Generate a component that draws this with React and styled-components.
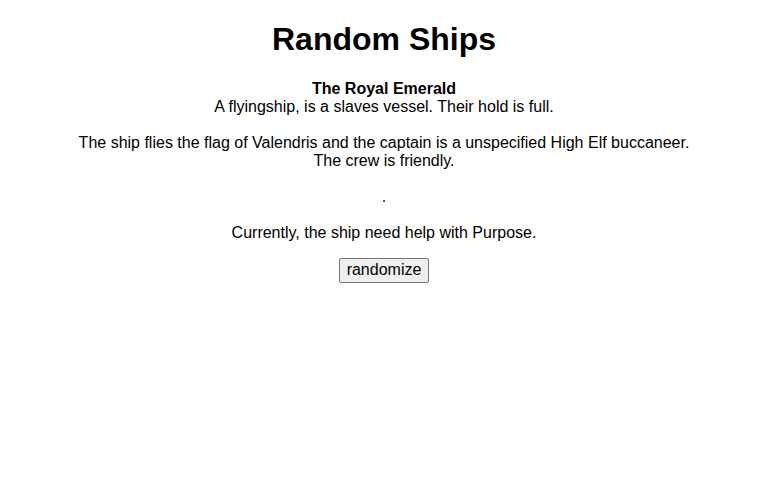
import { useState } from "react";
import styled, { createGlobalStyle } from "styled-components";

const GlobalStyle = createGlobalStyle`
  body {
    margin: 0 8px;
    background: #fff;
    color: #000;
    font-family: "Liberation Sans", Arial, sans-serif;
  }
`;

const Page = styled.div`
  text-align: center;
`;

const Title = styled.h1`
  font-size: 32px;
  font-weight: 700;
  line-height: 37px;
  margin: 21px 0 22px;
`;

const Story = styled.div`
  font-size: 16px;
  line-height: 18px;
`;

const ShipName = styled.b`
  font-weight: 700;
`;

const Randomize = styled.button`
  margin-top: 16px;
  padding: 2px 7px 3px;
  font-family: inherit;
  font-size: 16px;
  line-height: 18px;
  color: #000;
  background: #efefef;
  border: 1px solid #767676;
  border-radius: 2px;
  cursor: pointer;

  &:hover {
    background: #e5e5e5;
  }
`;

const ship = {
  name: "The Royal Emerald",
  kind: "flyingship",
  cargo: "slaves",
  hold: "full",
  flag: "Valendris",
  captain: "unspecified High Elf buccaneer",
  crew: "friendly",
  need: "Purpose",
};

const App = () => {
  const [s] = useState(ship);

  return (
    <Page>
      <GlobalStyle />
      <Title>Random Ships</Title>
      <Story>
        <ShipName>{s.name}</ShipName>
        <br />
        A {s.kind}, is a {s.cargo} vessel. Their hold is {s.hold}.
        <br />
        <br />
        The ship flies the flag of {s.flag} and the captain is a {s.captain}.
        <br />
        The crew is {s.crew}.
        <br />
        <br />
        .
        <br />
        <br />
        Currently, the ship need help with {s.need}.
      </Story>
      <Randomize>randomize</Randomize>
    </Page>
  );
};

export default App;
